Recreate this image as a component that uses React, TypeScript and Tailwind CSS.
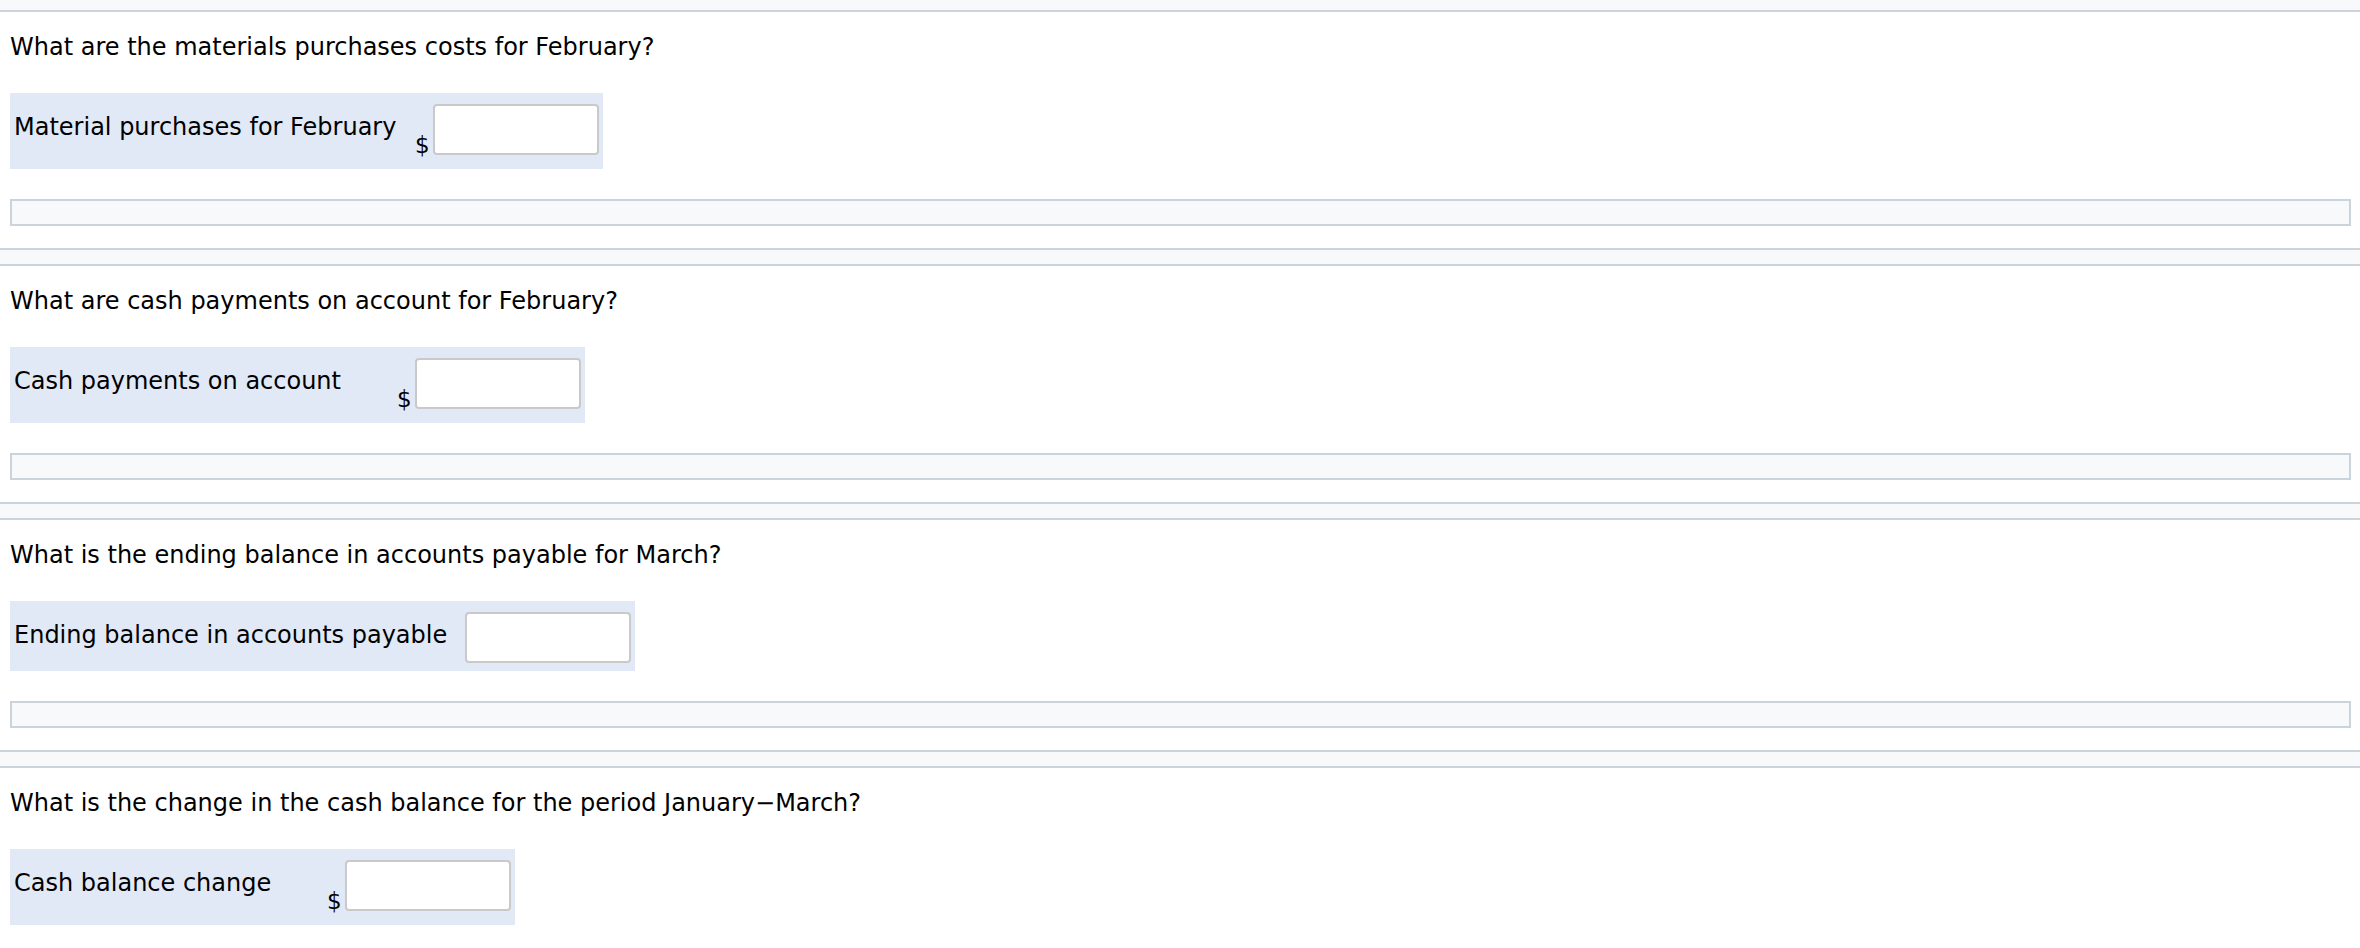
import React from "react";

type Row = {
  question: string;
  label: string;
  labelWidth: number;
  dollar: boolean;
};

const rows: Row[] = [
  {
    question: "What are the materials purchases costs for February?",
    label: "Material purchases for February",
    labelWidth: 405,
    dollar: true,
  },
  {
    question: "What are cash payments on account for February?",
    label: "Cash payments on account",
    labelWidth: 387,
    dollar: true,
  },
  {
    question: "What is the ending balance in accounts payable for March?",
    label: "Ending balance in accounts payable",
    labelWidth: 455,
    dollar: false,
  },
  {
    question: "What is the change in the cash balance for the period January\u2212March?",
    label: "Cash balance change",
    labelWidth: 317,
    dollar: true,
  },
];

function Band() {
  return <div className="h-[18px] w-full border-y-2 border-[#cbd3dd] bg-[#f7f9fb]" />;
}

function Section({ row, last }: { row: Row; last: boolean }) {
  return (
    <div>
      <div className="ml-[10px] mt-[21px] text-[24px] leading-[29px] text-black">{row.question}</div>
      <div className="ml-[10px] mt-[31px] inline-flex items-start bg-[#e1e9f7] pt-[11px] pb-[8px] pr-[4px]">
        <div
          className="mt-[9px] shrink-0 pl-[4px] text-[24px] leading-[28px] text-black"
          style={{ width: row.labelWidth }}
        >
          {row.label}
        </div>
        {row.dollar && (
          <div className="mt-[25px] w-[18px] shrink-0 text-[23px] leading-[32px] text-black">$</div>
        )}
        <input
          type="text"
          className="h-[51px] w-[166px] shrink-0 rounded-[4px] border-2 border-[#c9c9c9] bg-white outline-none"
        />
      </div>
      {!last && (
        <>
          <div className="ml-[10px] mr-[9px] mt-[30px] h-[27px] border-2 border-[#cbd3dd] bg-[#f7f9fb]" />
          <div className="mt-[22px]">
            <Band />
          </div>
        </>
      )}
    </div>
  );
}

export default function App() {
  return (
    <div
      className="min-h-[948px] w-full bg-white"
      style={{ fontFamily: '"DejaVu Sans", Verdana, sans-serif' }}
    >
      <div className="h-[12px] w-full border-b-2 border-[#cbd3dd] bg-[#f7f9fb]" />
      {rows.map((r, i) => (
        <Section key={i} row={r} last={i === rows.length - 1} />
      ))}
    </div>
  );
}
